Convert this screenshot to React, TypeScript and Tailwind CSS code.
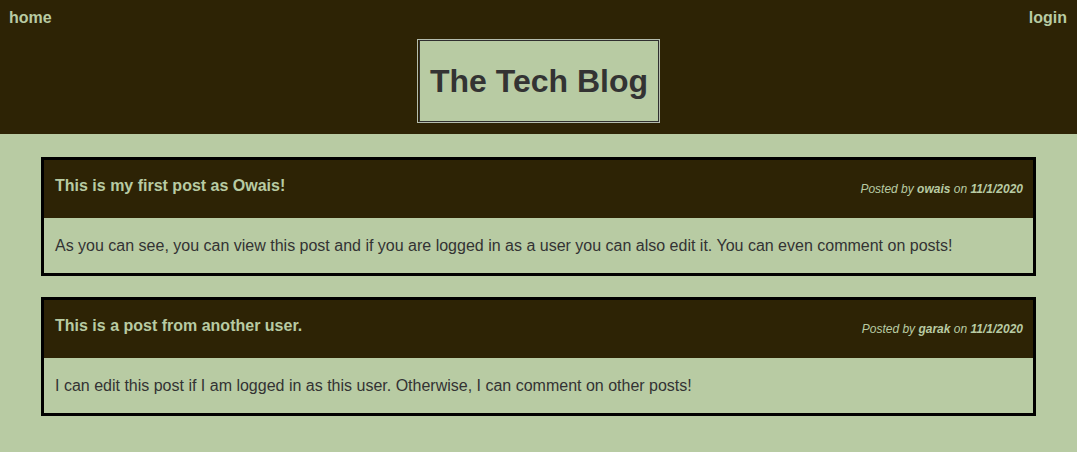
const posts = [
  {
    id: 1,
    title: 'This is my first post as Owais!',
    author: 'owais',
    date: '11/1/2020',
    body: 'As you can see, you can view this post and if you are logged in as a user you can also edit it. You can even comment on posts!',
  },
  {
    id: 2,
    title: 'This is a post from another user.',
    author: 'garak',
    date: '11/1/2020',
    body: 'I can edit this post if I am logged in as this user. Otherwise, I can comment on other posts!',
  },
];

export default function App() {
  return (
    <div
      className="min-h-[452px] bg-[#b8cba3] text-[#333333]"
      style={{ fontFamily: '"Liberation Sans", Arial, sans-serif' }}
    >
      <header className="h-[134px] bg-[#2d2305]">
        <nav className="flex justify-between px-[9px] pt-[9px] text-[16px] font-bold leading-[18px] text-[#b8cba3]">
          <a href="#">home</a>
          <a href="#" className="pr-px">login</a>
        </nav>
        <div className="mt-[12px] flex justify-center">
          <div className="border border-[#b4bcae] pl-px">
            <div className="flex h-[82px] w-[240px] items-center justify-center border border-[#2f2f2f] bg-[#b8cba3]">
              <h1 className="text-[32px] font-bold leading-none text-[#333333]">The Tech Blog</h1>
            </div>
          </div>
        </div>
      </header>

      <main className="flex flex-col gap-[21px] px-[41px] pt-[23px] pb-[36px]">
        {posts.map((post) => (
          <article key={post.id} className="border-[3px] border-black">
            <div className="flex h-[58px] items-center justify-between bg-[#2d2305] pl-[11px] pr-[10px] text-[#b8cba3]">
              <h2 className="mb-[6px] text-[16px] font-bold leading-[18px]">{post.title}</h2>
              <p className="text-[12px] italic leading-[14px]">
                Posted by <span className="font-bold">{post.author}</span> on{' '}
                <span className="font-bold">{post.date}</span>
              </p>
            </div>
            <div className="flex h-[55px] items-center pl-[11px] text-[16px]">
              <p>{post.body}</p>
            </div>
          </article>
        ))}
      </main>
    </div>
  );
}
